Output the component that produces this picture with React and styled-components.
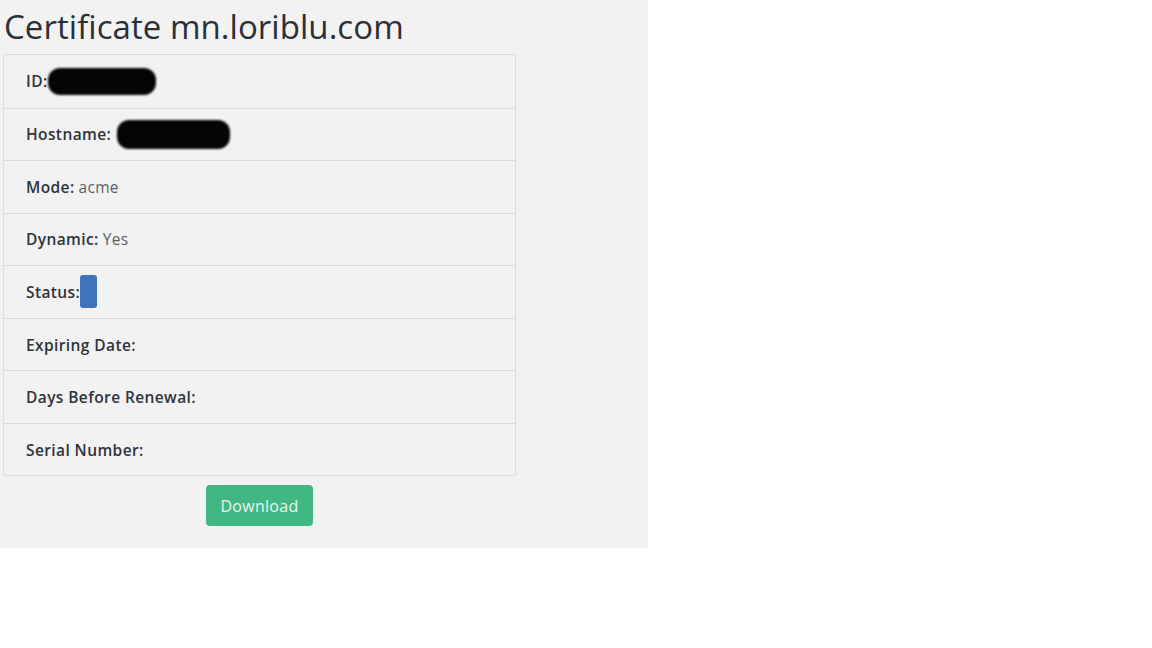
import React from 'react';
import styled, { createGlobalStyle } from 'styled-components';

const GlobalStyle = createGlobalStyle`
  body {
    margin: 0;
    background: #fff;
    font-family: "Open Sans", "Noto Sans", sans-serif;
  }
`;

const Panel = styled.div`
  width: 648px;
  height: 548px;
  background: #f2f2f2;
  padding: 0 3px;
  box-sizing: border-box;
  display: flex;
  flex-direction: column;
  align-items: flex-start;
`;

const Title = styled.h1`
  margin: 6px 0 0 1px;
  font-size: 33px;
  font-weight: 400;
  line-height: 42px;
  color: #2b2f36;
  letter-spacing: 0.05px;
`;

const List = styled.ul`
  list-style: none;
  margin: 6px 0 0;
  padding: 0;
  width: 513px;
  border: 1px solid #dcdcdc;
  border-radius: 2px;
  box-sizing: border-box;
`;

const Item = styled.li`
  height: 52.55px;
  box-sizing: border-box;
  padding: 0 22px;
  display: flex;
  align-items: center;
  font-size: 15.5px;
  letter-spacing: 0.3px;
  color: #5a5e66;
  border-top: ${p => (p.$first ? 'none' : '1px solid #dcdcdc')};
`;

const Label = styled.strong`
  font-weight: 600;
  color: #2f333a;
  margin-right: 4px;
  letter-spacing: 0.4px;
`;

const Redacted = styled.span`
  display: inline-block;
  width: ${p => p.$w}px;
  height: ${p => p.$h}px;
  background: #050505;
  border-radius: 12px;
  filter: blur(1.2px);
  margin-left: ${p => p.$ml || 0}px;
`;

const Badge = styled.span`
  display: inline-block;
  width: 17px;
  height: 33px;
  background: #3f74bd;
  border-radius: 3px;
  margin-left: -4px;
`;

const Footer = styled.div`
  width: 513px;
  display: flex;
  justify-content: center;
  margin-top: 9px;
`;

const Button = styled.button`
  width: 107px;
  height: 41px;
  border: none;
  border-radius: 4px;
  background: #41b883;
  color: #e8f6ef;
  font-family: inherit;
  font-size: 16px;
  letter-spacing: 0.3px;
  cursor: pointer;
`;

const rows = [
  { label: 'ID:', redact: { w: 108, h: 27, ml: -4 } },
  { label: 'Hostname:', redact: { w: 113, h: 29, ml: 2 } },
  { label: 'Mode:', value: 'acme' },
  { label: 'Dynamic:', value: 'Yes' },
  { label: 'Status:', badge: true },
  { label: 'Expiring Date:' },
  { label: 'Days Before Renewal:' },
  { label: 'Serial Number:' }
];

const App = () => (
  <>
    <GlobalStyle />
    <Panel>
      <Title>Certificate mn.loriblu.com</Title>
      <List>
        {rows.map((r, i) => (
          <Item key={r.label} $first={i === 0}>
            <Label>{r.label}</Label>
            {r.value}
            {r.redact && <Redacted $w={r.redact.w} $h={r.redact.h} $ml={r.redact.ml} />}
            {r.badge && <Badge />}
          </Item>
        ))}
      </List>
      <Footer>
        <Button>Download</Button>
      </Footer>
    </Panel>
  </>
);

export default App;
